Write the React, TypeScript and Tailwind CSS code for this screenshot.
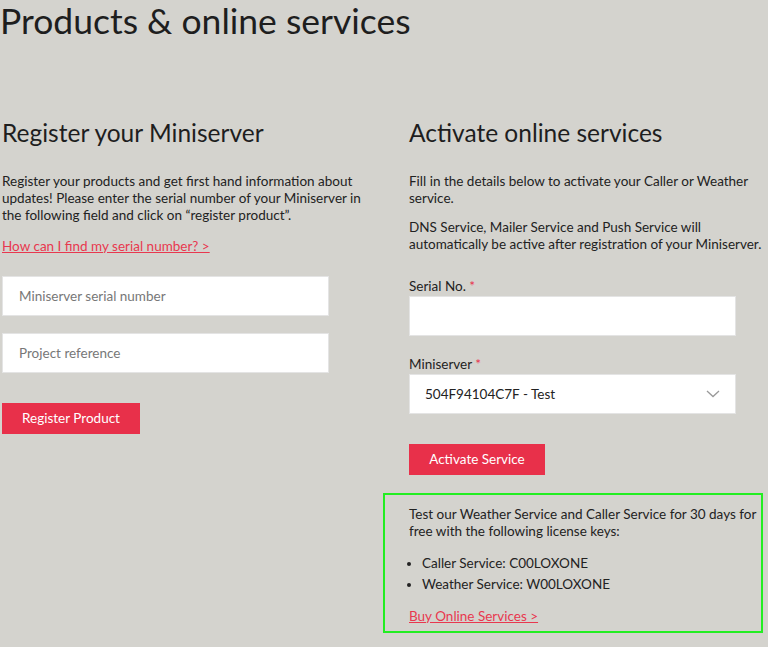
import React from "react";

const font = { fontFamily: "Lato, 'Noto Sans', sans-serif" };

function Chevron() {
  return (
    <svg width="14" height="8" viewBox="0 0 14 8" fill="none">
      <path d="M1 1l6 5.5L13 1" stroke="#9a9a9a" strokeWidth="1.3" />
    </svg>
  );
}

export default function App() {
  return (
    <div className="w-[768px] h-[647px] overflow-hidden bg-[#d4d3ce] text-[#222]" style={font}>
      <h1 className="text-[35.5px] leading-[42px] font-normal text-[#1e1e1e]">Products &amp; online services</h1>
      <div className="flex mt-[76px]">
        <div className="w-[406px] pl-[2px]">
          <h2 className="text-[24.5px] leading-[30px] text-[#1e1e1e]">Register your Miniserver</h2>
          <p className="mt-[25px] text-[13.5px] leading-[17px] w-[364px]">
            Register your products and get first hand information about updates! Please enter the serial number of your Miniserver in the following field and click on “register product”.
          </p>
          <a className="block mt-[14px] text-[13.5px] leading-[17px] text-[#e8384f] underline">How can I find my serial number? &gt;</a>
          <div className="mt-[21px] w-[327px] h-[40px] bg-white border border-[#e4e4e4] flex items-center pl-[16px] text-[13.5px] text-[#777]">
            Miniserver serial number
          </div>
          <div className="mt-[17px] w-[327px] h-[40px] bg-white border border-[#e4e4e4] flex items-center pl-[16px] text-[13.5px] text-[#777]">
            Project reference
          </div>
          <button className="mt-[30px] w-[138px] h-[31px] bg-[#e8304a] text-white text-[13.5px]">Register Product</button>
        </div>
        <div className="w-[362px] pl-[3px]">
          <h2 className="text-[24.5px] leading-[30px] text-[#1e1e1e]">Activate online services</h2>
          <p className="mt-[25px] text-[13.5px] leading-[17px]">
            Fill in the details below to activate your Caller or Weather service.
          </p>
          <p className="mt-[12px] text-[13.5px] leading-[17px]">
            DNS Service, Mailer Service and Push Service will automatically be active after registration of your Miniserver.
          </p>
          <div className="mt-[25px] text-[13.5px] leading-[17px]">
            Serial No. <span className="text-[#e8304a]">*</span>
          </div>
          <div className="mt-[1px] w-[327px] h-[40px] bg-white border border-[#e4e4e4]" />
          <div className="mt-[20px] text-[13.5px] leading-[17px]">
            Miniserver <span className="text-[#e8304a]">*</span>
          </div>
          <div className="mt-[1px] w-[327px] h-[40px] bg-white border border-[#e4e4e4] flex items-center justify-between pl-[15px] pr-[15px] text-[13.5px] text-[#222]">
            <span>504F94104C7F - Test</span>
            <Chevron />
          </div>
          <button className="mt-[30px] w-[136px] h-[31px] bg-[#e8304a] text-white text-[13.5px]">Activate Service</button>
          <div className="mt-[18px] -ml-[26px] w-[380px] h-[140px] border-2 border-[#22ee22] pl-[24px] pt-[11px] text-[13.5px] leading-[17px]">
            <p>Test our Weather Service and Caller Service for 30 days for free with the following license keys:</p>
            <ul className="mt-[15px] list-disc pl-[13px]">
              <li className="mb-[4px]">Caller Service: C00LOXONE</li>
              <li>Weather Service: W00LOXONE</li>
            </ul>
            <a className="block mt-[15px] text-[#e8384f] underline">Buy Online Services &gt;</a>
          </div>
        </div>
      </div>
    </div>
  );
}
